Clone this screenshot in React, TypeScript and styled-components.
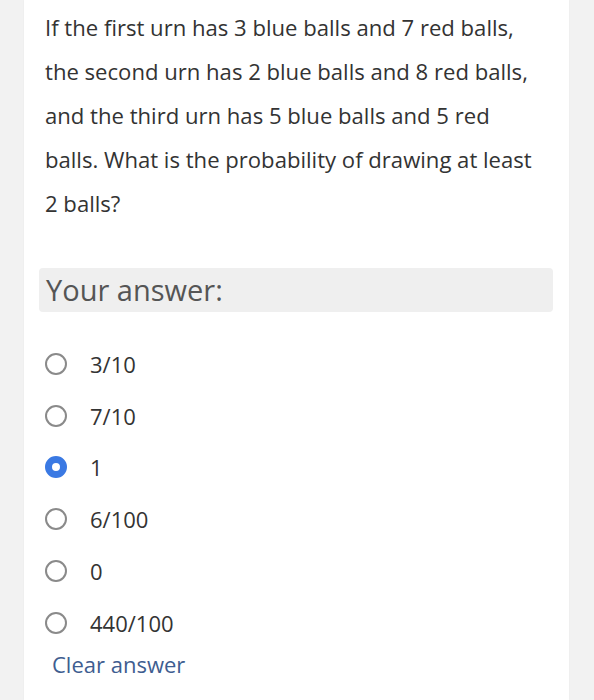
import React from "react";
import styled, { createGlobalStyle } from "styled-components";

const Global = createGlobalStyle`
  html, body { margin: 0; padding: 0; background: #f2f2f2; }
  body { font-family: "Open Sans", "Noto Sans", sans-serif; }
`;

const Page = styled.div`
  display: flex;
  min-height: 700px;
  padding-left: 24px;
`;

const Card = styled.div`
  width: 545px;
  min-height: 700px;
  background: #ffffff;
  box-sizing: border-box;
  padding: 5px 0 0 21px;
  box-shadow: 0 0 2px rgba(0, 0, 0, 0.04);
`;

const Question = styled.p`
  margin: 0;
  width: 495px;
  font-size: 22.1px;
  line-height: 44px;
  color: #333333;
`;

const AnswerHeader = styled.div`
  margin: 43px 0 0 -6px;
  width: 514px;
  height: 44px;
  box-sizing: border-box;
  padding-left: 7px;
  background: #efefef;
  border-radius: 4px;
  font-size: 29px;
  line-height: 44px;
  color: #555555;
`;

const Options = styled.div`
  margin-top: 26px;
  display: flex;
  flex-direction: column;
`;

const Option = styled.label`
  display: flex;
  align-items: center;
  height: 51.8px;
  gap: 23px;
  font-size: 22px;
  color: #333333;
`;

const Radio = styled.span<{ $checked?: boolean }>`
  width: 22px;
  height: 22px;
  box-sizing: border-box;
  border-radius: 50%;
  flex-shrink: 0;
  background: #ffffff;
  border: ${(p) => (p.$checked ? "7px solid #3a79e3" : "2px solid #8a8a8a")};
`;

const ClearLink = styled.a`
  display: block;
  margin-left: 7px;
  font-size: 22px;
  line-height: 30px;
  color: #3e5d90;
  text-decoration: none;
`;

const options = ["3/10", "7/10", "1", "6/100", "0", "440/100"];

export default function App() {
  return (
    <>
      <Global />
      <Page>
        <Card>
          <Question>
            If the first urn has 3 blue balls and 7 red balls, the second urn has 2 blue
            balls and 8 red balls, and the third urn has 5 blue balls and 5 red balls.
            What is the probability of drawing at least 2 balls?
          </Question>
          <AnswerHeader>Your answer:</AnswerHeader>
          <Options>
            {options.map((o) => (
              <Option key={o}>
                <Radio $checked={o === "1"} />
                {o}
              </Option>
            ))}
          </Options>
          <ClearLink>Clear answer</ClearLink>
        </Card>
      </Page>
    </>
  );
}
